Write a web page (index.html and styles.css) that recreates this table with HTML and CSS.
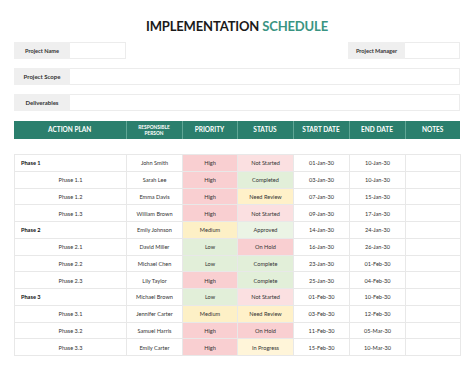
FILE: index.html
```html
<!DOCTYPE html>
<html>
<head>
<meta charset="utf-8">
<link rel="stylesheet" href="styles.css">
</head>
<body>
<div class="page">
  <h1 class="title">IMPLEMENTATION <span class="accent">SCHEDULE</span></h1>
  <div class="info-row split">
    <div class="field"><div class="label">Project Name</div><div class="value short"></div></div>
    <div class="field"><div class="label lbl-wide">Project Manager</div><div class="value short2"></div></div>
  </div>
  <div class="info-row">
    <div class="field grow"><div class="label lbl-big">Project Scope</div><div class="value fill"></div></div>
  </div>
  <div class="info-row">
    <div class="field grow"><div class="label lbl-big">Deliverables</div><div class="value fill"></div></div>
  </div>

  <table class="head">
    <colgroup><col class="c1"><col class="c2"><col class="c3"><col class="c4"><col class="c5"><col class="c6"><col class="c7"></colgroup>
    <tr>
      <th>ACTION PLAN</th>
      <th class="small">RESPONSIBLE<br>PERSON</th>
      <th>PRIORITY</th>
      <th>STATUS</th>
      <th>START DATE</th>
      <th>END DATE</th>
      <th>NOTES</th>
    </tr>
  </table>

  <table class="body">
    <colgroup><col class="c1"><col class="c2"><col class="c3"><col class="c4"><col class="c5"><col class="c6"><col class="c7"></colgroup>
    <tr><td class="phase">Phase 1</td><td>John Smith</td><td class="p-high">High</td><td class="s-ns">Not Started</td><td>01-Jan-30</td><td>10-Jan-30</td><td></td></tr>
    <tr><td>Phase 1.1</td><td>Sarah Lee</td><td class="p-high">High</td><td class="s-done">Completed</td><td>03-Jan-30</td><td>10-Jan-30</td><td></td></tr>
    <tr><td>Phase 1.2</td><td>Emma Davis</td><td class="p-high">High</td><td class="s-rev">Need Review</td><td>07-Jan-30</td><td>15-Jan-30</td><td></td></tr>
    <tr><td>Phase 1.3</td><td>William Brown</td><td class="p-high">High</td><td class="s-ns">Not Started</td><td>09-Jan-30</td><td>17-Jan-30</td><td></td></tr>
    <tr><td class="phase">Phase 2</td><td>Emily Johnson</td><td class="p-med">Medium</td><td class="s-appr">Approved</td><td>14-Jan-30</td><td>24-Jan-30</td><td></td></tr>
    <tr><td>Phase 2.1</td><td>David Miller</td><td class="p-low">Low</td><td class="s-hold">On Hold</td><td>16-Jan-30</td><td>26-Jan-30</td><td></td></tr>
    <tr><td>Phase 2.2</td><td>Michael Chen</td><td class="p-low">Low</td><td class="s-done">Complete</td><td>23-Jan-30</td><td>01-Feb-30</td><td></td></tr>
    <tr><td>Phase 2.3</td><td>Lily Taylor</td><td class="p-high">High</td><td class="s-done">Complete</td><td>25-Jan-30</td><td>04-Feb-30</td><td></td></tr>
    <tr><td class="phase">Phase 3</td><td>Michael Brown</td><td class="p-low">Low</td><td class="s-ns">Not Started</td><td>01-Feb-30</td><td>10-Feb-30</td><td></td></tr>
    <tr><td>Phase 3.1</td><td>Jennifer Carter</td><td class="p-med">Medium</td><td class="s-rev">Need Review</td><td>03-Feb-30</td><td>12-Feb-30</td><td></td></tr>
    <tr><td>Phase 3.2</td><td>Samuel Harris</td><td class="p-high">High</td><td class="s-hold">On Hold</td><td>11-Feb-30</td><td>05-Mar-30</td><td></td></tr>
    <tr><td>Phase 3.3</td><td>Emily Carter</td><td class="p-high">High</td><td class="s-prog">In Progress</td><td>15-Feb-30</td><td>10-Mar-30</td><td></td></tr>
  </table>
</div>
</body>
</html>
```

FILE: styles.css
```css
html, body {
  margin: 0;
  padding: 0;
  background: #ffffff;
}
body {
  font-family: Lato, "Open Sans", "Liberation Sans", sans-serif;
  color: #222;
}
.page {
  width: 446px;
  padding: 16px 14px 0 14px;
}
.title {
  margin: 0;
  text-align: center;
  font-size: 13px;
  line-height: 20px;
  font-weight: 700;
  color: #1a1a1a;
  letter-spacing: -0.15px;
}
.accent {
  color: #3a9482;
}
.info-row {
  display: flex;
  margin-top: 6px;
  height: 17px;
}
.info-row.split {
  justify-content: space-between;
}
.info-row + .info-row {
  margin-top: 9px;
}
.field {
  display: flex;
  height: 17px;
}
.field.grow {
  flex: 1;
}
.label {
  width: 56px;
  background: #efefef;
  font-size: 5.6px;
  font-weight: 700;
  display: flex;
  align-items: center;
  justify-content: center;
  color: #333;
}
.label.lbl-wide {
  width: 57px;
}
.label.lbl-big {
  font-size: 6px;
}
.value {
  box-sizing: border-box;
  border: 1px solid #ececec;
  border-left: none;
  background: #fff;
}
.value.short { width: 56px; }
.value.short2 { width: 55px; }
.value.fill { flex: 1; }

table {
  border-collapse: collapse;
  table-layout: fixed;
  width: 446px;
}
col.c1 { width: 112px; }
col.c2 { width: 56px; }
col.c3 { width: 55px; }
col.c4 { width: 56px; }
col.c5 { width: 56px; }
col.c6 { width: 56px; }
col.c7 { width: 55px; }

table.head {
  margin-top: 10px;
}
table.head th {
  height: 18px;
  padding: 0;
  background: #2b7f6d;
  color: #ffffff;
  font-size: 6.5px;
  font-weight: 700;
  border-left: 1px solid #5fa695;
  text-align: center;
  line-height: 8px;
}
table.head th:first-child { border-left: none; }
table.head th.small {
  font-size: 4.8px;
  line-height: 6px;
}

table.body {
  margin-top: 15px;
}
table.body td {
  height: 16.75px;
  padding: 0;
  font-size: 5.6px;
  color: #333;
  text-align: center;
  border: 1px solid #e8e8e8;
  box-sizing: border-box;
}
table.body td.phase {
  text-align: left;
  padding-left: 6px;
  font-weight: 700;
  color: #111;
}
.p-high { background: #f9cfd1; }
.p-med  { background: #fdf0c6; }
.p-low  { background: #e2efd9; }
.s-ns   { background: #fbe0e1; }
.s-done { background: #e2efd9; }
.s-rev  { background: #fff1c9; }
.s-appr { background: #ebf4e5; }
.s-hold { background: #f9cfd1; }
.s-prog { background: #fff5d9; }
```
